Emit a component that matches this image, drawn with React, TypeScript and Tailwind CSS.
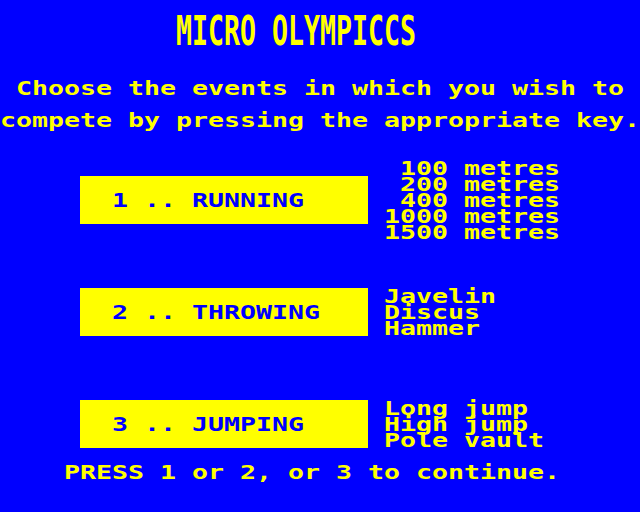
import React from "react";

// Text cell: 16px pitch per character, 16px per row, chunky monospace glyphs.
function T({ children, className = "" }: { children: React.ReactNode; className?: string }) {
  return (
    <span
      className={
        "block w-max whitespace-pre origin-left scale-x-[1.3987] font-bold text-[19px] leading-4 font-['DejaVu_Sans_Mono',monospace] " +
        className
      }
    >
      {children}
    </span>
  );
}

function Line({ text, className = "" }: { text: string; className?: string }) {
  return (
    <div className={"h-4 leading-4 " + className}>
      <T>{text}</T>
    </div>
  );
}

function EventBox({ label }: { label: string }) {
  return (
    <div className="w-[288px] h-12 bg-[#ffff00] text-[#0000ff] pl-8 pt-4 leading-4">
      <T>{label}</T>
    </div>
  );
}

function EventRow({
  label,
  items,
  boxOffset,
  className = "",
}: {
  label: string;
  items: string[];
  boxOffset: string;
  className?: string;
}) {
  return (
    <div className={"flex " + className}>
      <div className="w-[384px] pl-20 shrink-0">
        <div className={boxOffset}>
          <EventBox label={label} />
        </div>
      </div>
      <div className="flex flex-col">
        {items.map((it) => (
          <Line key={it} text={it} />
        ))}
      </div>
    </div>
  );
}

export default function App() {
  return (
    <div className="w-[640px] h-[512px] bg-[#0000ff] text-[#ffff00] flex flex-col overflow-hidden">
      <div className="pt-[15px] pl-[176px] h-[47px] leading-8">
        <span className="block w-max whitespace-pre origin-left scale-x-[0.6482] font-bold text-[41px] leading-8 font-['DejaVu_Sans_Mono',monospace]">
          MICRO OLYMPICCS
        </span>
      </div>

      <Line className="mt-[33px]" text=" Choose the events in which you wish to" />
      <Line className="mt-4" text="compete by pressing the appropriate key." />

      <EventRow
        className="mt-8"
        boxOffset="mt-4"
        label="1 .. RUNNING"
        items={[" 100 metres", " 200 metres", " 400 metres", "1000 metres", "1500 metres"]}
      />

      <EventRow
        className="mt-12"
        boxOffset=""
        label="2 .. THROWING"
        items={["Javelin", "Discus", "Hammer"]}
      />

      <EventRow
        className="mt-16"
        boxOffset=""
        label="3 .. JUMPING"
        items={["Long jump", "High jump", "Pole vault"]}
      />

      <Line className="mt-4 pl-16" text="PRESS 1 or 2, or 3 to continue." />
    </div>
  );
}
